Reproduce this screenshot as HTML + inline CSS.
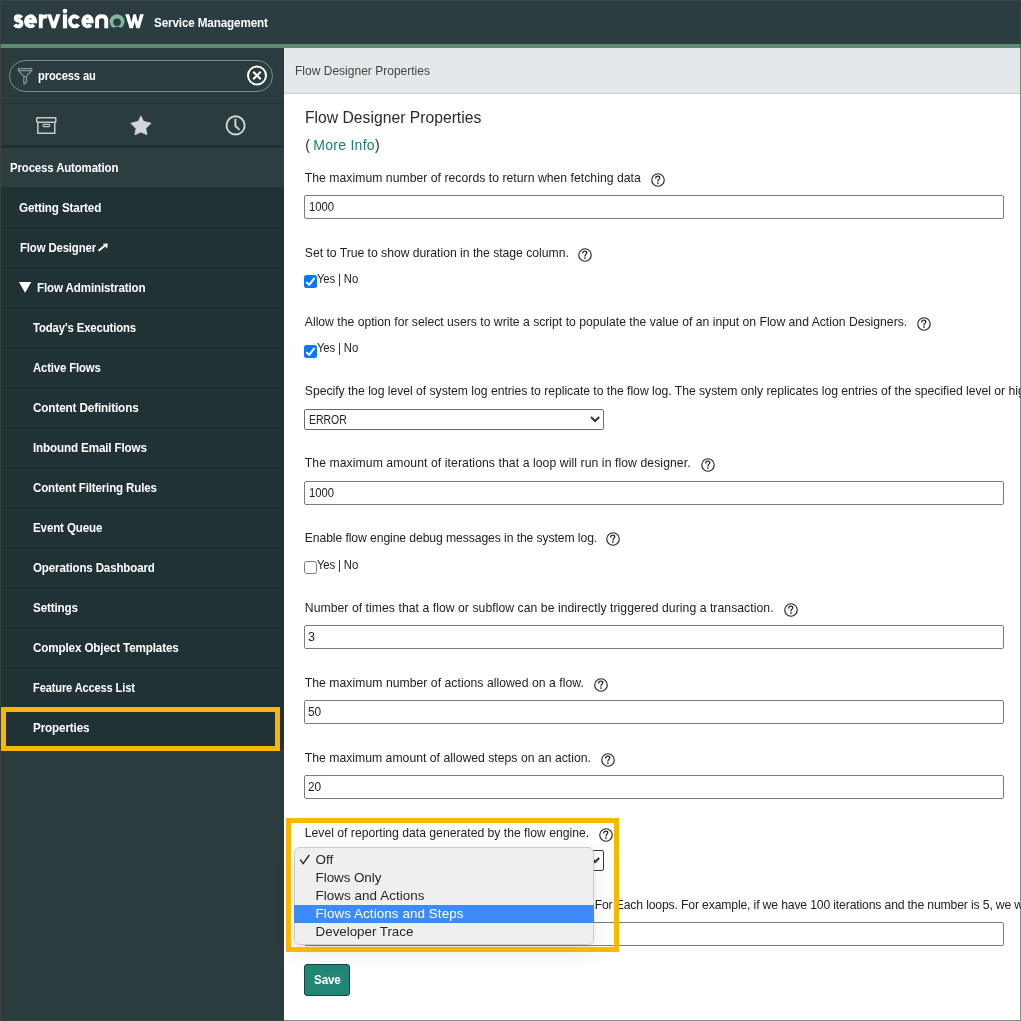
<!DOCTYPE html>
<html><head><meta charset="utf-8">
<style>
*{box-sizing:border-box;margin:0;padding:0}
html,body{width:1021px;height:1021px;overflow:hidden;background:#fff;font-family:"Liberation Sans",sans-serif;position:relative}
.abs{position:absolute}
.tx{position:absolute;line-height:1;white-space:nowrap;-webkit-font-smoothing:antialiased}
#wrap{position:absolute;left:0;top:0;width:1021px;height:1021px;will-change:transform}
#hdr{position:absolute;left:0;top:0;width:1021px;height:44px;background:#2b3d40}
#hline{position:absolute;left:0;top:44px;width:1021px;height:4px;background:#5e8a74}
#side{position:absolute;left:0;top:48px;width:284px;height:973px;background:#2b3c3e}
#pill{position:absolute;left:9px;top:60px;width:264px;height:32px;border:1px solid #808b8d;border-radius:16px}
#sdiv1{position:absolute;left:0;top:103px;width:284px;height:1px;background:#243335}
#sdiv2{position:absolute;left:0;top:145px;width:284px;height:3px;background:#223032}
#app{position:absolute;left:0;top:148px;width:284px;height:39px;background:#2c3e40}
.row{position:absolute;left:0;width:284px;height:40px;background:#213235;border-top:1px solid #1c2a2d}
.row.first{border-top:none}
#bar{position:absolute;left:284px;top:48px;width:737px;height:46px;background:#e4e8eb;border-bottom:1px solid #c9cdd0}
.inp{position:absolute;left:304px;width:700px;height:24px;border:1px solid #7b7b7b;border-radius:2px;background:#fff}
.sel{position:absolute;left:304px;width:300px;height:21px;border:1px solid #6b6b6b;border-radius:2px;background:#fff}
.cbx{position:absolute;left:304px;width:13px;height:13px;border-radius:2.5px;background:#0a75fd}
.cbu{position:absolute;left:304px;width:13px;height:13px;border-radius:2.5px;border:1px solid #7a7a7a;background:#fff}
.obox{position:absolute;border:5px solid #fab700}
#frame{position:absolute;left:0;top:0;width:1021px;height:1021px;border:1px solid rgba(70,70,70,0.64);pointer-events:none}
#popup{position:absolute;left:293.5px;top:846.5px;width:300.5px;height:98.5px;background:#efefef;border:1px solid #cdcdcd;border-radius:6px;box-shadow:0 8px 22px rgba(0,0,0,0.09),0 1px 3px rgba(0,0,0,0.07)}
#hl{position:absolute;left:294px;top:905px;width:300px;height:18px;background:#3d8bf6}
#savebtn{position:absolute;left:304px;top:964px;width:46px;height:32px;background:#218676;border:1px solid #11483f;border-radius:3px}
</style></head><body><div id="wrap">
<div id="hdr"></div>
<div id="hline"></div>
<svg class="abs" style="left:0;top:0" width="150" height="44" viewBox="0 0 150 44">
 <g fill="none" stroke="#fff" stroke-width="3.9">
  <path d="M21.6 17.6 C20.7 16.6 19.5 16.25 18.4 16.25 C16.9 16.25 15.8 17.1 15.8 18.4 C15.8 21.5 21.45 19.9 21.45 23.4 C21.45 25.4 19.9 26.35 18.3 26.35 C17 26.35 15.6 25.8 14.7 24.6"/>
  <path d="M25.95 21.3 H35.05 A4.55 5.05 0 1 0 33.9 24.7"/>
  <path d="M40.75 28.3 V14.3 M40.75 21 C40.75 17.6 42.6 16.25 47.2 16.25"/>
  <path d="M78.4 18.4 A4.65 5.05 0 1 0 78.4 24.3"/>
  <path d="M83.35 21.3 H91.75 A4.2 5.05 0 1 0 90.7 24.7"/>
  <path d="M97.05 28.3 V20 C97.05 17.2 99.1 16.25 101.65 16.25 C104.2 16.25 106.25 17.2 106.25 20.2 V28.3"/>
 </g>
 <path d="M47 14.3 H51.1 L53.7 22 L56.3 14.3 H60.4 L55.6 28.3 H51.8 Z" fill="#fff"/>
 <path d="M125.3 14.3 H129.1 L131.4 22.2 L133.4 14.3 H135.9 L137.9 22.2 L140.1 14.3 H143.8 L139.6 28.3 H136.3 L134.65 21.8 L133 28.3 H129.6 Z" fill="#fff"/>
 <rect x="62.9" y="14.4" width="4.2" height="13.9" fill="#fff"/>
 <circle cx="64.95" cy="11.1" r="2.35" fill="#fff"/>
 <path fill-rule="evenodd" fill="#7fb6a0" d="M113.2 27.8 A7.45 7.35 0 1 1 120.9 27.8 Q117.05 25.9 113.2 27.8 Z M117.05 18.45 A3.8 3.8 0 1 0 117.05 26.05 A3.8 3.8 0 1 0 117.05 18.45 Z"/>
</svg>
<div id="smg" class="tx" style="left:154.00px;top:16.00px;font-size:13.00px;font-weight:bold;color:#ffffff;letter-spacing:-0.150px;transform:scaleX(0.8991);transform-origin:0 0;">Service Management</div>
<div id="side"></div>
<div id="pill"></div>
<svg class="abs" style="left:12px;top:62px" width="28" height="28" viewBox="0 0 28 28">
 <path d="M6.3 6.6 H19.8 V8.6 L13.8 14.6 H12.3 L6.3 8.6 Z M6.3 8.6 H19.8" fill="none" stroke="#8a9497" stroke-width="1.2" stroke-linejoin="round"/>
 <path d="M11.8 14.6 V21.8 L12.6 21.8 L14.6 20 V14.6" fill="none" stroke="#8a9497" stroke-width="1.2"/>
</svg>
<div id="srch" class="tx" style="left:38.40px;top:70.16px;font-size:12.80px;font-weight:bold;color:#ffffff;letter-spacing:-0.150px;transform:scaleX(0.8727);transform-origin:0 0;">process au</div>
<svg class="abs" style="left:245px;top:64px" width="24" height="24" viewBox="0 0 24 24">
 <circle cx="12" cy="11.5" r="9" fill="none" stroke="#fff" stroke-width="2"/>
 <path d="M8.2 7.7 L15.8 15.3 M15.8 7.7 L8.2 15.3" stroke="#fff" stroke-width="2"/>
</svg>
<div id="sdiv1"></div>
<svg class="abs" style="left:30px;top:108px" width="30" height="30" viewBox="0 0 30 30">
 <rect x="6.8" y="9.7" width="19" height="4.5" fill="none" stroke="#c5cacc" stroke-width="1.5" rx="0.6"/>
 <path d="M7.8 14.2 V25.2 H24.8 V14.2" fill="none" stroke="#c5cacc" stroke-width="1.5"/>
 <rect x="12.8" y="16.4" width="7" height="2.2" rx="1.1" fill="none" stroke="#c5cacc" stroke-width="1.1"/>
</svg>
<svg class="abs" style="left:125px;top:108px" width="30" height="30" viewBox="0 0 30 30">
 <path d="M15.9 7.9 L18.5 13.3 L26 15.3 L20.8 20.5 L22 26.8 L15.9 24 L9.9 26.8 L11 20.5 L5.9 15.3 L13.3 13.3 Z" fill="#d2d6d9" stroke="#d2d6d9" stroke-width="0.8" stroke-linejoin="round"/>
</svg>
<svg class="abs" style="left:220px;top:108px" width="30" height="30" viewBox="0 0 30 30">
 <circle cx="15.6" cy="17.4" r="9.1" fill="none" stroke="#d2d6d9" stroke-width="1.9"/>
 <path d="M15.4 11.4 V18 L19 21.4" fill="none" stroke="#d2d6d9" stroke-width="1.9" stroke-linecap="round" stroke-linejoin="round"/>
</svg>
<div id="sdiv2"></div>
<div id="app"></div>
<div id="pa" class="tx" style="left:9.60px;top:161.50px;font-size:12.40px;font-weight:bold;color:#ffffff;letter-spacing:-0.150px;transform:scaleX(0.9227);transform-origin:0 0;">Process Automation</div><div class="row first" style="top:187px"></div><div class="row" style="top:227px"></div><div class="row" style="top:267px"></div><div class="row" style="top:307px"></div><div class="row" style="top:347px"></div><div class="row" style="top:387px"></div><div class="row" style="top:427px"></div><div class="row" style="top:467px"></div><div class="row" style="top:507px"></div><div class="row" style="top:547px"></div><div class="row" style="top:587px"></div><div class="row" style="top:627px"></div><div class="row" style="top:667px"></div><div class="row" style="top:707px"></div><div class="abs" style="left:0;top:747px;width:284px;height:1px;background:#1c2a2d"></div><div id="s0" class="tx" style="left:19.10px;top:201.50px;font-size:12.40px;font-weight:bold;color:#ffffff;letter-spacing:-0.150px;transform:scaleX(0.9416);transform-origin:0 0;">Getting Started</div><div id="s1" class="tx" style="left:19.50px;top:241.50px;font-size:12.40px;font-weight:bold;color:#ffffff;letter-spacing:-0.150px;transform:scaleX(0.9181);transform-origin:0 0;">Flow Designer</div><div id="s2" class="tx" style="left:36.50px;top:281.50px;font-size:12.40px;font-weight:bold;color:#ffffff;letter-spacing:-0.150px;transform:scaleX(0.9368);transform-origin:0 0;">Flow Administration</div><div id="s3" class="tx" style="left:33.20px;top:321.50px;font-size:12.40px;font-weight:bold;color:#ffffff;letter-spacing:-0.150px;transform:scaleX(0.9171);transform-origin:0 0;">Today's Executions</div><div id="s4" class="tx" style="left:33.10px;top:361.50px;font-size:12.40px;font-weight:bold;color:#ffffff;letter-spacing:-0.150px;transform:scaleX(0.9136);transform-origin:0 0;">Active Flows</div><div id="s5" class="tx" style="left:33.10px;top:401.50px;font-size:12.40px;font-weight:bold;color:#ffffff;letter-spacing:-0.150px;transform:scaleX(0.9474);transform-origin:0 0;">Content Definitions</div><div id="s6" class="tx" style="left:33.10px;top:441.50px;font-size:12.40px;font-weight:bold;color:#ffffff;letter-spacing:-0.150px;transform:scaleX(0.9405);transform-origin:0 0;">Inbound Email Flows</div><div id="s7" class="tx" style="left:33.10px;top:481.50px;font-size:12.40px;font-weight:bold;color:#ffffff;letter-spacing:-0.150px;transform:scaleX(0.9323);transform-origin:0 0;">Content Filtering Rules</div><div id="s8" class="tx" style="left:33.10px;top:521.50px;font-size:12.40px;font-weight:bold;color:#ffffff;letter-spacing:-0.150px;transform:scaleX(0.9348);transform-origin:0 0;">Event Queue</div><div id="s9" class="tx" style="left:33.20px;top:561.50px;font-size:12.40px;font-weight:bold;color:#ffffff;letter-spacing:-0.150px;transform:scaleX(0.9325);transform-origin:0 0;">Operations Dashboard</div><div id="s10" class="tx" style="left:33.10px;top:601.50px;font-size:12.40px;font-weight:bold;color:#ffffff;letter-spacing:-0.150px;transform:scaleX(0.9407);transform-origin:0 0;">Settings</div><div id="s11" class="tx" style="left:33.10px;top:641.50px;font-size:12.40px;font-weight:bold;color:#ffffff;letter-spacing:-0.150px;transform:scaleX(0.9425);transform-origin:0 0;">Complex Object Templates</div><div id="s12" class="tx" style="left:33.10px;top:681.50px;font-size:12.40px;font-weight:bold;color:#ffffff;letter-spacing:-0.150px;transform:scaleX(0.8944);transform-origin:0 0;">Feature Access List</div><div id="s13" class="tx" style="left:33.30px;top:721.50px;font-size:12.40px;font-weight:bold;color:#ffffff;letter-spacing:-0.150px;transform:scaleX(0.9442);transform-origin:0 0;">Properties</div>
<svg class="abs" style="left:96px;top:242px" width="14" height="12" viewBox="0 0 14 12">
 <path d="M2.6 8.8 L9.6 3" stroke="#fff" stroke-width="2"/>
 <path d="M6.8 1.8 L11.8 1.6 L11.2 6.8 Z" fill="#fff"/>
</svg>
<svg class="abs" style="left:18px;top:281px" width="14" height="13" viewBox="0 0 14 13">
 <path d="M0.9 1 H13.3 L7.1 11.8 Z" fill="#fff"/>
</svg>
<div id="bar"></div>
<div id="bart" class="tx" style="left:295.30px;top:65.33px;font-size:12.60px;font-weight:normal;color:#464646;letter-spacing:0.000px;transform:scaleX(0.9548);transform-origin:0 0;">Flow Designer Properties</div><div id="title" class="tx" style="left:305.30px;top:110.46px;font-size:16.00px;font-weight:normal;color:#2b2b2b;letter-spacing:0.000px;transform:scaleX(0.9815);transform-origin:0 0;">Flow Designer Properties</div><div id="more" class="tx" style="left:305.30px;top:138.15px;font-size:14.00px;font-weight:normal;color:#2b2b2b;letter-spacing:0.282px;">(<span style="color:#1c7f70;margin-left:3px">More Info</span>)</div><div id="l1" class="tx" style="left:304.80px;top:171.67px;font-size:12.20px;font-weight:normal;color:#222222;letter-spacing:0.036px;">The maximum number of records to return when fetching data</div><svg class="abs" style="left:649.8px;top:171.7px" width="16" height="16" viewBox="0 0 16 16"><circle cx="8" cy="8" r="6.25" fill="none" stroke="#262626" stroke-width="1.15"/><path d="M5.75 6.1 C5.75 4.75 6.7 4.05 7.8 4.05 C8.95 4.05 9.75 4.8 9.75 5.8 C9.75 7.05 8.05 7.3 7.95 9" fill="none" stroke="#262626" stroke-width="1.3" stroke-linecap="round"/><circle cx="7.95" cy="11.1" r="0.85" fill="#262626"/></svg>
<div class="inp" style="top:195px"></div>
<div id="v1" class="tx" style="left:308.90px;top:200.84px;font-size:12.00px;font-weight:normal;color:#222;letter-spacing:0.000px;transform:scaleX(0.9400);transform-origin:0 0;">1000</div><div id="l2" class="tx" style="left:304.80px;top:246.97px;font-size:12.20px;font-weight:normal;color:#222222;letter-spacing:-0.019px;">Set to True to show duration in the stage column.</div><svg class="abs" style="left:577.4px;top:246.7px" width="16" height="16" viewBox="0 0 16 16"><circle cx="8" cy="8" r="6.25" fill="none" stroke="#262626" stroke-width="1.15"/><path d="M5.75 6.1 C5.75 4.75 6.7 4.05 7.8 4.05 C8.95 4.05 9.75 4.8 9.75 5.8 C9.75 7.05 8.05 7.3 7.95 9" fill="none" stroke="#262626" stroke-width="1.3" stroke-linecap="round"/><circle cx="7.95" cy="11.1" r="0.85" fill="#262626"/></svg>
<div class="cbx" style="top:275px"></div>
<svg class="abs" style="left:304px;top:275px" width="13" height="13" viewBox="0 0 13 13"><path d="M2.3 7.2 L5.3 9.8 L10.6 2.9" fill="none" stroke="#fff" stroke-width="2"/></svg>
<div id="yn0" class="tx" style="left:317.20px;top:272.67px;font-size:12.20px;font-weight:normal;color:#222222;letter-spacing:-0.150px;transform:scaleX(0.9289);transform-origin:0 0;">Yes | No</div><div id="l3" class="tx" style="left:304.80px;top:315.77px;font-size:12.20px;font-weight:normal;color:#222222;letter-spacing:0.001px;">Allow the option for select users to write a script to populate the value of an input on Flow and Action Designers.</div><svg class="abs" style="left:916.0px;top:315.6px" width="16" height="16" viewBox="0 0 16 16"><circle cx="8" cy="8" r="6.25" fill="none" stroke="#262626" stroke-width="1.15"/><path d="M5.75 6.1 C5.75 4.75 6.7 4.05 7.8 4.05 C8.95 4.05 9.75 4.8 9.75 5.8 C9.75 7.05 8.05 7.3 7.95 9" fill="none" stroke="#262626" stroke-width="1.3" stroke-linecap="round"/><circle cx="7.95" cy="11.1" r="0.85" fill="#262626"/></svg>
<div class="cbx" style="top:345px"></div>
<svg class="abs" style="left:304px;top:345px" width="13" height="13" viewBox="0 0 13 13"><path d="M2.3 7.2 L5.3 9.8 L10.6 2.9" fill="none" stroke="#fff" stroke-width="2"/></svg>
<div id="yn1" class="tx" style="left:317.20px;top:341.67px;font-size:12.20px;font-weight:normal;color:#222222;letter-spacing:-0.150px;transform:scaleX(0.9289);transform-origin:0 0;">Yes | No</div><div id="l4" class="tx" style="left:304.80px;top:384.67px;font-size:12.20px;font-weight:normal;color:#222222;letter-spacing:-0.024px;">Specify the log level of system log entries to replicate to the flow log. The system only replicates log entries of the specified level or higher.</div>
<div class="sel" style="top:409px"></div>
<svg class="abs" style="left:588px;top:413px" width="14" height="12" viewBox="0 0 14 12"><path d="M3 4 L7.1 8 L11.2 4" fill="none" stroke="#333" stroke-width="2"/></svg>
<div id="v4" class="tx" style="left:309.40px;top:413.84px;font-size:12.00px;font-weight:normal;color:#222;letter-spacing:0.000px;transform:scaleX(0.8721);transform-origin:0 0;">ERROR</div><div id="l5" class="tx" style="left:304.80px;top:456.67px;font-size:12.20px;font-weight:normal;color:#222222;letter-spacing:0.082px;">The maximum amount of iterations that a loop will run in flow designer.</div><svg class="abs" style="left:699.5px;top:456.6px" width="16" height="16" viewBox="0 0 16 16"><circle cx="8" cy="8" r="6.25" fill="none" stroke="#262626" stroke-width="1.15"/><path d="M5.75 6.1 C5.75 4.75 6.7 4.05 7.8 4.05 C8.95 4.05 9.75 4.8 9.75 5.8 C9.75 7.05 8.05 7.3 7.95 9" fill="none" stroke="#262626" stroke-width="1.3" stroke-linecap="round"/><circle cx="7.95" cy="11.1" r="0.85" fill="#262626"/></svg>
<div class="inp" style="top:481px"></div>
<div id="v5" class="tx" style="left:308.90px;top:486.84px;font-size:12.00px;font-weight:normal;color:#222;letter-spacing:0.000px;transform:scaleX(0.9400);transform-origin:0 0;">1000</div><div id="l6" class="tx" style="left:304.80px;top:531.67px;font-size:12.20px;font-weight:normal;color:#222222;letter-spacing:-0.098px;">Enable flow engine debug messages in the system log.</div><svg class="abs" style="left:605.4px;top:531.3px" width="16" height="16" viewBox="0 0 16 16"><circle cx="8" cy="8" r="6.25" fill="none" stroke="#262626" stroke-width="1.15"/><path d="M5.75 6.1 C5.75 4.75 6.7 4.05 7.8 4.05 C8.95 4.05 9.75 4.8 9.75 5.8 C9.75 7.05 8.05 7.3 7.95 9" fill="none" stroke="#262626" stroke-width="1.3" stroke-linecap="round"/><circle cx="7.95" cy="11.1" r="0.85" fill="#262626"/></svg>
<div class="cbu" style="top:561px"></div>
<div id="yn2" class="tx" style="left:317.20px;top:558.67px;font-size:12.20px;font-weight:normal;color:#222222;letter-spacing:-0.150px;transform:scaleX(0.9289);transform-origin:0 0;">Yes | No</div><div id="l7" class="tx" style="left:304.80px;top:601.67px;font-size:12.20px;font-weight:normal;color:#222222;letter-spacing:0.054px;">Number of times that a flow or subflow can be indirectly triggered during a transaction.</div><svg class="abs" style="left:782.6px;top:601.8px" width="16" height="16" viewBox="0 0 16 16"><circle cx="8" cy="8" r="6.25" fill="none" stroke="#262626" stroke-width="1.15"/><path d="M5.75 6.1 C5.75 4.75 6.7 4.05 7.8 4.05 C8.95 4.05 9.75 4.8 9.75 5.8 C9.75 7.05 8.05 7.3 7.95 9" fill="none" stroke="#262626" stroke-width="1.3" stroke-linecap="round"/><circle cx="7.95" cy="11.1" r="0.85" fill="#262626"/></svg>
<div class="inp" style="top:625px"></div>
<div id="v7" class="tx" style="left:308.30px;top:630.84px;font-size:12.00px;font-weight:normal;color:#222;letter-spacing:0.000px;transform:scaleX(1.0467);transform-origin:0 0;">3</div><div id="l8" class="tx" style="left:304.80px;top:676.67px;font-size:12.20px;font-weight:normal;color:#222222;letter-spacing:0.041px;">The maximum number of actions allowed on a flow.</div><svg class="abs" style="left:592.9px;top:676.5px" width="16" height="16" viewBox="0 0 16 16"><circle cx="8" cy="8" r="6.25" fill="none" stroke="#262626" stroke-width="1.15"/><path d="M5.75 6.1 C5.75 4.75 6.7 4.05 7.8 4.05 C8.95 4.05 9.75 4.8 9.75 5.8 C9.75 7.05 8.05 7.3 7.95 9" fill="none" stroke="#262626" stroke-width="1.3" stroke-linecap="round"/><circle cx="7.95" cy="11.1" r="0.85" fill="#262626"/></svg>
<div class="inp" style="top:700px"></div>
<div id="v8" class="tx" style="left:308.30px;top:705.84px;font-size:12.00px;font-weight:normal;color:#222;letter-spacing:0.000px;transform:scaleX(0.9881);transform-origin:0 0;">50</div><div id="l9" class="tx" style="left:304.80px;top:751.67px;font-size:12.20px;font-weight:normal;color:#222222;letter-spacing:0.019px;">The maximum amount of allowed steps on an action.</div><svg class="abs" style="left:599.9px;top:751.6px" width="16" height="16" viewBox="0 0 16 16"><circle cx="8" cy="8" r="6.25" fill="none" stroke="#262626" stroke-width="1.15"/><path d="M5.75 6.1 C5.75 4.75 6.7 4.05 7.8 4.05 C8.95 4.05 9.75 4.8 9.75 5.8 C9.75 7.05 8.05 7.3 7.95 9" fill="none" stroke="#262626" stroke-width="1.3" stroke-linecap="round"/><circle cx="7.95" cy="11.1" r="0.85" fill="#262626"/></svg>
<div class="inp" style="top:775px"></div>
<div id="v9" class="tx" style="left:308.30px;top:780.84px;font-size:12.00px;font-weight:normal;color:#222;letter-spacing:0.000px;transform:scaleX(0.9881);transform-origin:0 0;">20</div><div id="l10" class="tx" style="left:304.80px;top:826.67px;font-size:12.20px;font-weight:normal;color:#222222;letter-spacing:-0.005px;">Level of reporting data generated by the flow engine.</div><svg class="abs" style="left:598.0px;top:826.6px" width="16" height="16" viewBox="0 0 16 16"><circle cx="8" cy="8" r="6.25" fill="none" stroke="#262626" stroke-width="1.15"/><path d="M5.75 6.1 C5.75 4.75 6.7 4.05 7.8 4.05 C8.95 4.05 9.75 4.8 9.75 5.8 C9.75 7.05 8.05 7.3 7.95 9" fill="none" stroke="#262626" stroke-width="1.3" stroke-linecap="round"/><circle cx="7.95" cy="11.1" r="0.85" fill="#262626"/></svg>
<div class="sel" style="top:850px;border-color:#3a3a3a"></div>
<svg class="abs" style="left:587.6px;top:854.3px" width="14" height="12" viewBox="0 0 14 12"><path d="M3 4 L7.1 8 L11.2 4" fill="none" stroke="#333" stroke-width="2"/></svg>
<div id="l11" class="tx" style="left:594.70px;top:898.67px;font-size:12.20px;font-weight:normal;color:#222222;letter-spacing:-0.150px;">For Each loops. For example, if we have 100 iterations and the number is 5, we will save the context.</div>
<div class="inp" style="top:922px"></div>
<div id="savebtn"></div>
<div id="save" class="tx" style="left:314.00px;top:973.50px;font-size:12.40px;font-weight:bold;color:#ffffff;letter-spacing:-0.150px;transform:scaleX(0.9406);transform-origin:0 0;">Save</div>
<div id="popup"></div>
<div id="hl"></div>
<svg class="abs" style="left:298px;top:853px" width="14" height="14" viewBox="0 0 14 14"><path d="M2.2 6.6 L5.1 10.6 L11.3 2" fill="none" stroke="#262626" stroke-width="1.4"/></svg>
<div id="p0" class="tx" style="left:315.60px;top:852.66px;font-size:13.40px;font-weight:normal;color:#262626;letter-spacing:0.000px;">Off</div><div id="p1" class="tx" style="left:315.60px;top:870.66px;font-size:13.40px;font-weight:normal;color:#262626;letter-spacing:-0.048px;">Flows Only</div><div id="p2" class="tx" style="left:315.60px;top:888.66px;font-size:13.40px;font-weight:normal;color:#262626;letter-spacing:0.054px;">Flows and Actions</div><div id="p3" class="tx" style="left:315.60px;top:906.66px;font-size:13.40px;font-weight:normal;color:#ffffff;letter-spacing:0.087px;">Flows Actions and Steps</div><div id="p4" class="tx" style="left:315.60px;top:924.66px;font-size:13.40px;font-weight:normal;color:#262626;letter-spacing:-0.032px;">Developer Trace</div>
<div class="obox" style="left:1px;top:707px;width:279px;height:44px"></div>
<div class="obox" style="left:286px;top:818px;width:333px;height:134px"></div>
<div id="frame"></div>
</div></body></html>
